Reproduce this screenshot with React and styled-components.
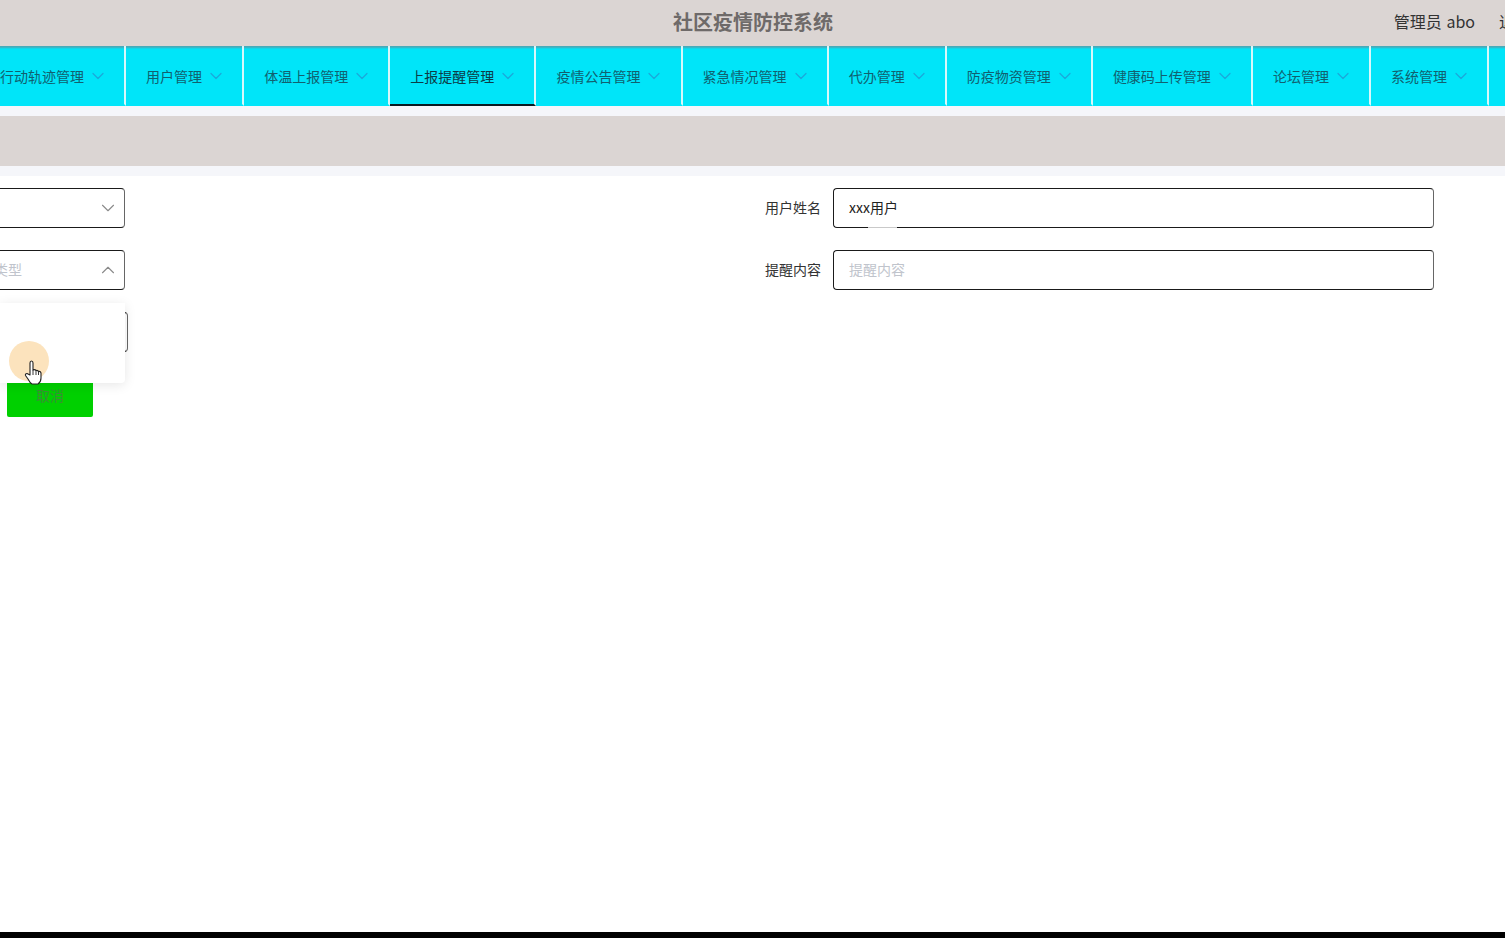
import React from "react"
import styled, { createGlobalStyle } from "styled-components"
import { ChevronDown, ChevronUp } from "lucide-react"

const menus = [
  "行动轨迹管理",
  "用户管理",
  "体温上报管理",
  "上报提醒管理",
  "疫情公告管理",
  "紧急情况管理",
  "代办管理",
  "防疫物资管理",
  "健康码上传管理",
  "论坛管理",
  "系统管理",
]

const Global = createGlobalStyle`
  html, body {
    margin: 0;
    padding: 0;
    height: 100%;
    overflow: hidden;
    background: #fff;
  }
  body {
    font-family: "Noto Sans CJK SC", "Liberation Sans", sans-serif;
  }
`

const Page = styled.div`
  width: 1505px;
  height: 938px;
  display: flex;
  flex-direction: column;
  overflow: hidden;
  background: #fff;
`

const Header = styled.header`
  height: 46px;
  flex: none;
  display: grid;
  grid-template-columns: 1fr auto 1fr;
  align-items: center;
  background: #dbd5d3;
  color: #333;
`

const Title = styled.h1`
  grid-column: 2;
  margin: 0 0 2px;
  padding-left: 1px;
  font-size: 20px;
  line-height: 44px;
  font-weight: 700;
  color: #6e6a69;
`

const UserBox = styled.div`
  grid-column: 3;
  display: flex;
  justify-content: flex-end;
  gap: 24px;
  margin: 0 -26px 4px 0;
  font-size: 16px;
  line-height: 42px;
  word-spacing: 1px;
  white-space: nowrap;
`

const Nav = styled.nav`
  height: 60px;
  flex: none;
  display: flex;
  margin-left: -20px;
  background: #00e5f9;
  box-shadow: inset 0 3px 2px -1px #4aa8b6;
`

const NavItem = styled.div`
  flex: none;
  display: flex;
  align-items: center;
  padding: 2px 20.12px 0 20px;
  border-right: 2px solid #d8f7fa;
  border-bottom: 2px solid ${(p) => (p.$active ? "#0a1a20" : "transparent")};
  font-size: 14px;
  color: ${(p) => (p.$active ? "#0c3b46" : "#11606f")};
  white-space: nowrap;

  svg {
    margin: 0 -4px 0 4px;
    color: #1aa9da;
  }
`

const Strip = styled.div`
  height: 10px;
  flex: none;
  background: #f5f6fa;
`

const Crumb = styled.div`
  height: 50px;
  flex: none;
  background: #dbd5d3;
`

const Form = styled.form`
  position: relative;
  flex: 1;
  display: grid;
  grid-template-columns: 125px 601px;
  grid-auto-rows: 40px;
  column-gap: 708px;
  row-gap: 22px;
  padding-top: 12px;
`

const Field = styled.div`
  display: flex;
  align-items: center;
  justify-content: flex-end;
  position: relative;
`

const Label = styled.label`
  position: absolute;
  right: 100%;
  margin: 0 12px 2px 0;
  font-size: 14px;
  color: #333;
  white-space: nowrap;
`

const Box = styled.div`
  position: relative;
  width: 100%;
  height: 40px;
  box-sizing: border-box;
  display: flex;
  align-items: center;
  justify-content: space-between;
  padding: 0 5px 0 15px;
  border: 1px solid #1a1a1a;
  border-right-color: #666;
  border-left-width: ${(p) => (p.$cut ? "0" : "1px")};
  border-radius: ${(p) => (p.$cut ? "0 4px 4px 0" : "4px")};
  font-size: 14px;
  color: #222;

  svg {
    flex: none;
    margin-left: auto;
    color: #8a8a8a;
  }
`

const Value = styled.span`
  margin-bottom: 2px;
  white-space: nowrap;
`

const Placeholder = styled(Value)`
  color: #c0c4cc;
`

const ClippedHint = styled(Placeholder)`
  margin-left: -21px;
  margin-right: auto;
`

const Smudge = styled.i`
  position: absolute;
  left: 34px;
  bottom: -1px;
  width: 29px;
  height: 1px;
  background: #c9c9c9;
`

const ThirdBox = styled(Box)`
  width: 128px;
  flex: none;
  margin-right: -3px;
`

const Actions = styled.div`
  grid-column: 1;
  display: flex;
  padding-left: 7px;
  margin-top: 3px;
`

const CancelButton = styled.button`
  width: 86px;
  height: 40px;
  padding: 0 0 4px;
  border: 0;
  border-radius: 2px;
  background: #00d000;
  color: #3a8f35;
  font: 14px "Noto Sans CJK SC", "Liberation Sans", sans-serif;
`

const Dropdown = styled.div`
  position: absolute;
  left: 0;
  top: 127px;
  width: 125px;
  height: 80px;
  background: #fff;
  border-radius: 0 0 4px 0;
  box-shadow: 0 2px 12px rgba(0, 0, 0, 0.1);
`

const CursorHalo = styled.div`
  position: absolute;
  left: 9px;
  top: 165px;
  width: 40px;
  height: 40px;
  border-radius: 50%;
  background: #fce3bd;
`

const Hand = styled.svg`
  position: absolute;
  left: 24px;
  top: 184px;
  width: 19px;
  height: 25px;
`

const BottomBar = styled.div`
  height: 6px;
  flex: none;
  background: #000;
`

export default function App() {
  return (
    <Page>
      <Global />
      <Header>
        <Title>社区疫情防控系统</Title>
        <UserBox>
          <span>管理员 abo</span>
          <span>退出</span>
        </UserBox>
      </Header>
      <Nav>
        {menus.map((m) => (
          <NavItem key={m} $active={m === "上报提醒管理"}>
            {m}
            <ChevronDown size={20} strokeWidth={1.5} />
          </NavItem>
        ))}
      </Nav>
      <Strip />
      <Crumb />
      <Strip />
      <Form>
        <Field>
          <Box $cut>
            <ChevronDown size={22} strokeWidth={1.2} />
          </Box>
        </Field>
        <Field>
          <Label>用户姓名</Label>
          <Box>
            <Value>xxx用户</Value>
            <Smudge />
          </Box>
        </Field>
        <Field>
          <Box $cut>
            <ClippedHint>类型</ClippedHint>
            <ChevronUp size={22} strokeWidth={1.2} />
          </Box>
        </Field>
        <Field>
          <Label>提醒内容</Label>
          <Box>
            <Placeholder>提醒内容</Placeholder>
          </Box>
        </Field>
        <Field>
          <ThirdBox $cut />
        </Field>
        <Actions>
          <CancelButton type="button">取消</CancelButton>
        </Actions>
        <Dropdown />
        <CursorHalo />
        <Hand viewBox="0 0 19 25">
          <path
            d="M6 15 L6 3 Q6 1 7.5 1 Q9 1 9 3 L9 10 Q11 9 12 10.5 Q14 10 14.5 11.5 Q16.5 11 17 13 L17 18 Q17 22 14 24 L8 24 Q6 23 4 19 L1.5 15.5 Q1 13.5 3 13.5 Z"
            fill="#fff"
            stroke="#222"
            strokeWidth="1.1"
            strokeLinejoin="round"
          />
          <path d="M9 10 V15 M12 10.5 V15 M14.5 11.5 V15" stroke="#222" strokeWidth="0.9" fill="none" />
        </Hand>
      </Form>
      <BottomBar />
    </Page>
  )
}
